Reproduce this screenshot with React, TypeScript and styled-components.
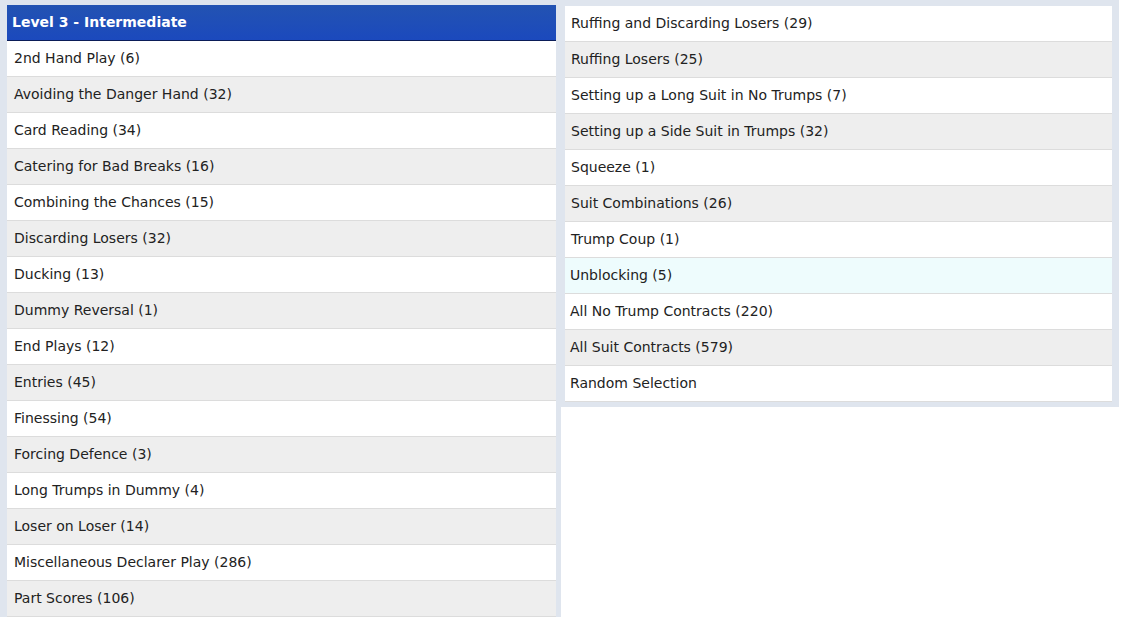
import React from "react";
import styled, { createGlobalStyle } from "styled-components";

const GlobalStyle = createGlobalStyle`
	html, body {
		margin: 0;
		padding: 0;
		background: #ffffff;
	}
	body {
		font-family: "DejaVu Sans", Verdana, sans-serif;
		font-size: 14px;
		color: #222;
	}
`;

const Page = styled.div`
	display: flex;
	align-items: flex-start;
	width: 1125px;
	height: 617px;
	overflow: hidden;
`;

const Panel = styled.div<{ $side: "left" | "right" }>`
	background: #dfe5ee;
	width: ${p => (p.$side === "left" ? "549px" : "547px")};
	padding: ${p => (p.$side === "left" ? "5px 5px 0 7px" : "6px 7px 5px 4px")};
`;

const Header = styled.div`
	height: 35px;
	box-sizing: border-box;
	display: flex;
	align-items: center;
	padding: 0 0 2px 5px;
	background: linear-gradient(to bottom, #2353b2, #1b49bd);
	border-bottom: 1px solid #0b1d58;
	color: #fff;
	font-weight: bold;
	font-size: 14px;
	height: 36px;
`;

const Row = styled.div<{ $shade: "white" | "grey" | "hover"; $indent: number }>`
	height: 36px;
	box-sizing: border-box;
	display: flex;
	align-items: center;
	padding: 0 0 2px ${p => p.$indent}px;
	border-bottom: 1px solid #dcdcdc;
	background: ${p =>
		p.$shade === "hover" ? "#eefcfd" : p.$shade === "grey" ? "#eeeeee" : "#ffffff"};
	white-space: nowrap;
	cursor: pointer;
`;

const leftTopics = [
	"2nd Hand Play (6)",
	"Avoiding the Danger Hand (32)",
	"Card Reading (34)",
	"Catering for Bad Breaks (16)",
	"Combining the Chances (15)",
	"Discarding Losers (32)",
	"Ducking (13)",
	"Dummy Reversal (1)",
	"End Plays (12)",
	"Entries (45)",
	"Finessing (54)",
	"Forcing Defence (3)",
	"Long Trumps in Dummy (4)",
	"Loser on Loser (14)",
	"Miscellaneous Declarer Play (286)",
	"Part Scores (106)",
];

const rightTopics = [
	"Ruffing and Discarding Losers (29)",
	"Ruffing Losers (25)",
	"Setting up a Long Suit in No Trumps (7)",
	"Setting up a Side Suit in Trumps (32)",
	"Squeeze (1)",
	"Suit Combinations (26)",
	"Trump Coup (1)",
	"Unblocking (5)",
	"All No Trump Contracts (220)",
	"All Suit Contracts (579)",
	"Random Selection",
];

export default function App() {
	return (
		<>
			<GlobalStyle />
			<Page>
				<Panel $side="left">
					<Header>Level 3 - Intermediate</Header>
					{leftTopics.map((topic, i) => (
						<Row key={topic} $indent={7} $shade={i % 2 === 0 ? "white" : "grey"}>
							{topic}
						</Row>
					))}
				</Panel>
				<Panel $side="right">
					{rightTopics.map((topic, i) => {
						const hovered = topic.startsWith("Unblocking");
						return (
							<Row
								key={topic}
								$indent={i >= 7 ? 5 : 6}
								$shade={hovered ? "hover" : i % 2 === 0 ? "white" : "grey"}
							>
								{topic}
							</Row>
						);
					})}
				</Panel>
			</Page>
		</>
	);
}
